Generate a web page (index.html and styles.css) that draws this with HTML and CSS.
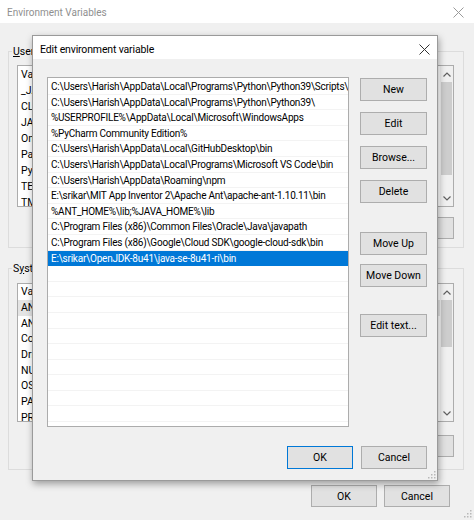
FILE: index.html
```html
<!DOCTYPE html>
<html>
<head>
<meta charset="utf-8">
<link rel="stylesheet" href="styles.css">
</head>
<body>
<div class="win">
  <div class="titlebar">
    <span class="wtitle">Environment Variables</span>
    <svg class="xicon" width="11" height="11" viewBox="0 0 11 11"><path d="M0.5 0.5 L10.5 10.5 M10.5 0.5 L0.5 10.5" stroke="#9a9a9a" stroke-width="1" fill="none"/></svg>
  </div>
  <div class="wbody">
    <div class="group g-user">
      <div class="glabel"><u>U</u>ser variables for Harish</div>
      <div class="listbox lb-user">
        <div class="lcols">
          <div class="lhead">Variable</div>
          <div class="lrow">_JAVA_OPTIONS</div>
          <div class="lrow">CLASSPATH</div>
          <div class="lrow">JAVA_HOME</div>
          <div class="lrow">OneDrive</div>
          <div class="lrow">Path</div>
          <div class="lrow">PyCharm Community Edition</div>
          <div class="lrow">TEMP</div>
          <div class="lrow">TMP</div>
        </div>
        <div class="vscroll">
          <div class="arrow"><svg width="8" height="5" viewBox="0 0 8 5"><path d="M0.5 4.5 L4 1 L7.5 4.5" stroke="#606060" stroke-width="1.2" fill="none"/></svg></div>
          <div class="thumb th-user"></div>
          <div class="track"></div>
          <div class="arrow"><svg width="8" height="5" viewBox="0 0 8 5"><path d="M0.5 0.5 L4 4 L7.5 0.5" stroke="#606060" stroke-width="1.2" fill="none"/></svg></div>
        </div>
      </div>
      <div class="gbtns gb-user">
        <button class="btn bbtn">New...</button>
        <button class="btn bbtn">Edit...</button>
        <button class="btn bbtn">Delete</button>
      </div>
    </div>
    <div class="group g-sys">
      <div class="glabel">S<u>y</u>stem variables</div>
      <div class="listbox lb-sys">
        <div class="lcols">
          <div class="lhead">Variable</div>
          <div class="lrow inactive-sel">ANDROID_HOME</div>
          <div class="lrow">ANT_HOME</div>
          <div class="lrow">ComSpec</div>
          <div class="lrow">DriverData</div>
          <div class="lrow">NUMBER_OF_PROCESSORS</div>
          <div class="lrow">OS</div>
          <div class="lrow">PATHEXT</div>
          <div class="lrow">PROCESSOR_ARCHITECTURE</div>
        </div>
        <div class="vscroll">
          <div class="arrow"><svg width="8" height="5" viewBox="0 0 8 5"><path d="M0.5 4.5 L4 1 L7.5 4.5" stroke="#606060" stroke-width="1.2" fill="none"/></svg></div>
          <div class="thumb th-sys"></div>
          <div class="track"></div>
          <div class="arrow"><svg width="8" height="5" viewBox="0 0 8 5"><path d="M0.5 0.5 L4 4 L7.5 0.5" stroke="#606060" stroke-width="1.2" fill="none"/></svg></div>
        </div>
      </div>
      <div class="gbtns gb-sys">
        <button class="btn bbtn">New...</button>
        <button class="btn bbtn">Edit...</button>
        <button class="btn bbtn">Delete</button>
      </div>
    </div>
    <div class="wfooter">
      <button class="btn bbtn">OK</button>
      <button class="btn bbtn">Cancel</button>
    </div>
  </div>
  <svg class="grip" width="9" height="9" viewBox="0 0 9 9"><g fill="#b8b8b8"><rect x="7" y="1" width="1.5" height="1.5"/><rect x="4" y="4" width="1.5" height="1.5"/><rect x="7" y="4" width="1.5" height="1.5"/><rect x="1" y="7" width="1.5" height="1.5"/><rect x="4" y="7" width="1.5" height="1.5"/><rect x="7" y="7" width="1.5" height="1.5"/></g></svg>
</div>

<div class="dialog">
  <div class="dtitle">
    <span>Edit environment variable</span>
    <svg class="dx" width="11" height="11" viewBox="0 0 11 11"><path d="M0.5 0.5 L10.5 10.5 M10.5 0.5 L0.5 10.5" stroke="#333" stroke-width="1" fill="none"/></svg>
  </div>
  <div class="dbody">
    <div class="dmain">
      <div class="plist">
        <div class="prow">C:\Users\Harish\AppData\Local\Programs\Python\Python39\Scripts\</div>
        <div class="prow">C:\Users\Harish\AppData\Local\Programs\Python\Python39\</div>
        <div class="prow">%USERPROFILE%\AppData\Local\Microsoft\WindowsApps</div>
        <div class="prow">%PyCharm Community Edition%</div>
        <div class="prow">C:\Users\Harish\AppData\Local\GitHubDesktop\bin</div>
        <div class="prow">C:\Users\Harish\AppData\Local\Programs\Microsoft VS Code\bin</div>
        <div class="prow">C:\Users\Harish\AppData\Roaming\npm</div>
        <div class="prow">E:\srikar\MIT App Inventor 2\Apache Ant\apache-ant-1.10.11\bin</div>
        <div class="prow">%ANT_HOME%\lib;%JAVA_HOME%\lib</div>
        <div class="prow">C:\Program Files (x86)\Common Files\Oracle\Java\javapath</div>
        <div class="prow">C:\Program Files (x86)\Google\Cloud SDK\google-cloud-sdk\bin</div>
        <div class="prow selected">E:\srikar\OpenJDK-8u41\java-se-8u41-ri\bin</div>
        <div class="prow"></div>
        <div class="prow"></div>
        <div class="prow"></div>
        <div class="prow"></div>
        <div class="prow"></div>
        <div class="prow"></div>
        <div class="prow"></div>
        <div class="prow"></div>
        <div class="prow"></div>
        <div class="prow"></div>
        <div class="prow"></div>
      </div>
      <div class="dbtns">
        <button class="btn dbtn b-new">New</button>
        <button class="btn dbtn">Edit</button>
        <button class="btn dbtn">Browse...</button>
        <button class="btn dbtn">Delete</button>
        <button class="btn dbtn b-up">Move Up</button>
        <button class="btn dbtn b-down">Move Down</button>
        <button class="btn dbtn b-text">Edit text...</button>
      </div>
    </div>
    <div class="dfooter">
      <button class="btn fbtn default">OK</button>
      <button class="btn fbtn">Cancel</button>
    </div>
  </div>
  <svg class="grip dgrip" width="9" height="9" viewBox="0 0 9 9"><g fill="#b8b8b8"><rect x="7" y="1" width="1.5" height="1.5"/><rect x="4" y="4" width="1.5" height="1.5"/><rect x="7" y="4" width="1.5" height="1.5"/><rect x="1" y="7" width="1.5" height="1.5"/><rect x="4" y="7" width="1.5" height="1.5"/><rect x="7" y="7" width="1.5" height="1.5"/></g></svg>
</div>
</body>
</html>
```

FILE: styles.css
```css
* { box-sizing: border-box; }
html, body { margin: 0; padding: 0; }
body {
  width: 474px;
  height: 520px;
  overflow: hidden;
  position: relative;
  background: #f0f0f0;
  font-family: Roboto, "Noto Sans", sans-serif;
  font-size: 10px;
  color: #000;
}

.win {
  width: 474px;
  height: 520px;
  background: #f0f0f0;
  display: flex;
  flex-direction: column;
  position: relative;
}
.titlebar {
  height: 23px;
  flex: none;
  background: #fff;
  display: flex;
  align-items: center;
  justify-content: space-between;
  padding: 1px 10px 0 7px;
}
.wtitle { color: #8f8f8f; font-size: 10px; }

.wbody {
  flex: 1;
  padding: 28px 10px 0 8px;
  display: flex;
  flex-direction: column;
}
.group {
  border: 1px solid #dcdcdc;
  padding: 0 9px 8px 8px;
  display: flex;
  flex-direction: column;
}
.g-sys { margin-top: 20px; padding-bottom: 12px; }
.glabel {
  align-self: flex-start;
  margin: -8px 0 0 -5px;
  padding: 0 1px;
  line-height: 16px;
  font-size: 10.5px;
  background: #f0f0f0;
}
.listbox {
  background: #fff;
  border: 1px solid #acacac;
  display: flex;
  margin-top: 5px;
}
.lb-user { height: 142px; }
.lb-sys { height: 139px; margin-top: 6px; }
.lcols { flex: 1; overflow: hidden; font-size: 10.5px; }
.lhead {
  height: 17px;
  line-height: 17px;
  padding-left: 3px;
  white-space: nowrap;
}
.lrow {
  height: 16px;
  line-height: 16px;
  padding-left: 3px;
  white-space: nowrap;
}
.lb-sys .lhead { height: 16px; line-height: 16px; }
.lb-sys .lrow { height: 15.7px; line-height: 15.7px; }
.inactive-sel { background: #e4e4e4; }
.vscroll {
  width: 13px;
  background: #f0f0f0;
  display: flex;
  flex-direction: column;
}
.arrow {
  height: 16px;
  display: flex;
  align-items: center;
  justify-content: center;
}
.thumb { background: #cdcdcd; margin: 0 1px; }
.th-user { height: 93px; }
.th-sys { height: 47px; }
.track { flex: 1; }

.btn {
  font-family: inherit;
  font-size: 10.5px;
  color: #000;
  background: #e1e1e1;
  border: 1px solid #adadad;
  padding: 0;
  margin: 0;
}
.gbtns {
  display: flex;
  justify-content: flex-end;
  gap: 7px;
  margin-top: 10px;
}
.gb-sys { margin-top: 13px; }
.bbtn { width: 66px; height: 22px; }
.wfooter {
  display: flex;
  justify-content: flex-end;
  gap: 7px;
  margin-top: 15px;
  padding-right: 14px;
}
.grip { position: absolute; right: 2px; bottom: 2px; }

.dialog {
  position: absolute;
  left: 32px;
  top: 35px;
  width: 406px;
  height: 446px;
  background: #f0f0f0;
  border: 1px solid #9a9a9a;
  box-shadow: 1px 3px 7px rgba(0, 0, 0, 0.35);
  display: flex;
  flex-direction: column;
}
.dtitle {
  height: 23px;
  flex: none;
  background: #fff;
  display: flex;
  align-items: center;
  justify-content: space-between;
  padding: 3px 7px 0 7px;
  font-size: 10.5px;
  letter-spacing: -0.15px;
}
.dbody {
  flex: 1;
  padding: 18px 10px 11px 14px;
  display: flex;
  flex-direction: column;
}
.dmain { display: flex; gap: 11px; }
.plist {
  width: 302px;
  height: 350px;
  background: #fff;
  border: 1px solid #acacac;
  padding-top: 1px;
  overflow: hidden;
}
.prow {
  height: 15.6px;
  line-height: 15px;
  padding-left: 3px;
  white-space: nowrap;
  overflow: hidden;
  letter-spacing: -0.22px;
  border-bottom: 1px solid #f3f3f3;
}
.prow.selected { background: #0078d7; color: #fff; border-bottom-color: #0078d7; }
.dbtns { display: flex; flex-direction: column; width: 67px; }
.dbtn { height: 23px; margin-top: 11px; }
.b-new { margin-top: 1px; }
.b-up { margin-top: 29px; }
.b-down { margin-top: 9px; }
.b-text { margin-top: 27px; }
.dfooter {
  display: flex;
  justify-content: flex-end;
  gap: 8px;
  margin-top: 19px;
}
.fbtn { width: 66px; height: 23px; }
.fbtn.default { border-color: #0078d7; }
.dgrip { right: 1px; bottom: 1px; }
```
